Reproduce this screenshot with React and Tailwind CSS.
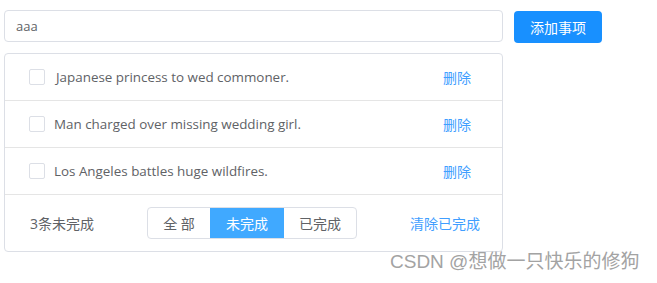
import { useState } from 'react';

const initialTodos = [
  { id: 1, title: 'Japanese princess to wed commoner.', done: false },
  { id: 2, title: 'Man charged over missing wedding girl.', done: false },
  { id: 3, title: 'Los Angeles battles huge wildfires.', done: false },
];

const font = { fontFamily: '"Open Sans", "Noto Sans CJK SC", sans-serif' };

export default function App() {
  const [todos, setTodos] = useState(initialTodos);
  const [text, setText] = useState('aaa');
  const [filter, setFilter] = useState('active');

  const left = todos.filter(t => !t.done).length;

  return (
    <div className="w-[657px] h-[283px] bg-white relative text-[#606266] pt-[10px] pl-1" style={font}>
      <div className="flex items-start">
        <input
          value={text}
          onChange={e => setText(e.target.value)}
          className="w-[499px] h-[32px] border border-[#dcdfe6] rounded px-[11px] text-[13px] text-[#606266] outline-none"
        />
        <button className="ml-[11px] mt-px w-[88px] h-[32px] rounded bg-[#1890ff] text-white text-[14px]">添加事项</button>
      </div>

      {/* list */}
      <div className="mt-[10px] w-[499px] border border-[#dcdfe6] rounded">
        {todos.map((todo, i) => (
          <div key={todo.id} className="h-[47px] flex items-center border-b border-[#e5e5e5] pl-[24px] pr-[31px] text-[13.4px]">
            <span className="w-[16px] h-[16px] border border-[#dcdfe6] rounded-[2px] bg-white" />
            <span className={i === 0 ? 'ml-[11px] flex-1' : 'ml-[9px] flex-1'}>{todo.title}</span>
            <button
              className="text-[#409eff] text-[14px]"
              onClick={() => setTodos(todos.filter(t => t.id !== todo.id))}
            >删除</button>
          </div>
        ))}
        <div className="h-[56px] flex items-center pl-[25px] pr-[22px] text-[14px]">
          <span className="w-[117px]">{left}条未完成</span>
          <div className="flex h-[32px] border border-[#dcdfe6] rounded overflow-hidden text-[14px]">
            <button onClick={() => setFilter('all')} className={'w-[62px] ' + (filter === 'all' ? 'bg-[#40a9ff] text-white' : 'text-[#606266]')}>全 部</button>
            <button onClick={() => setFilter('active')} className={'w-[74px] ' + (filter === 'active' ? 'bg-[#40a9ff] text-white' : 'text-[#606266]')}>未完成</button>
            <button onClick={() => setFilter('done')} className={'w-[72px] ' + (filter === 'done' ? 'bg-[#40a9ff] text-white' : 'text-[#606266]')}>已完成</button>
          </div>
          <button className="ml-auto text-[#409eff] text-[14px]">清除已完成</button>
        </div>
      </div>

      <div className="absolute left-[390px] top-[248px] text-[19px] text-[#a3a3a3]" style={{ fontFamily: '"Liberation Sans", "Noto Sans CJK SC", sans-serif' }}>
        CSDN @想做一只快乐的修狗
      </div>
    </div>
  );
}
